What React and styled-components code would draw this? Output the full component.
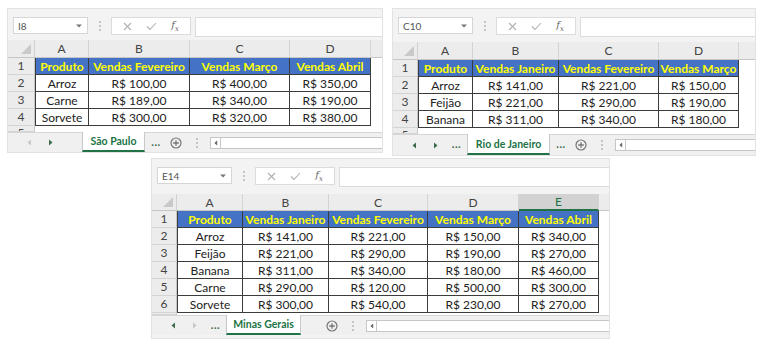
import React from "react";
import styled, { createGlobalStyle } from "styled-components";

const GREEN = "#217346";

const sheets = [
  {
    id: "sp",
    cell: "I8",
    width: 376,
    toolbar: 31,
    headerRow: 18,
    partial: 6,
    tabHeight: 20,
    tabWidth: 63,
    bottomPad: 0,
    rowHeader: 27,
    cols: [54, 101, 100, 81],
    headers: ["Produto", "Vendas Fevereiro", "Vendas Março", "Vendas Abril"],
    rows: [
      ["Arroz", "R$ 100,00", "R$ 400,00", "R$ 350,00"],
      ["Carne", "R$ 189,00", "R$ 340,00", "R$ 190,00"],
      ["Sorvete", "R$ 300,00", "R$ 320,00", "R$ 380,00"],
    ],
    tab: "São Paulo",
    prevActive: false,
    nextActive: true,
    leftDots: false,
    rightDots: true,
  },
  {
    id: "rj",
    cell: "C10",
    width: 364,
    toolbar: 33,
    headerRow: 18,
    partial: 6,
    tabHeight: 21,
    tabWidth: 83,
    bottomPad: 0,
    rowHeader: 25,
    cols: [55, 86, 100, 80],
    headers: ["Produto", "Vendas Janeiro", "Vendas Fevereiro", "Vendas Março"],
    rows: [
      ["Arroz", "R$ 141,00", "R$ 221,00", "R$ 150,00"],
      ["Feijão", "R$ 221,00", "R$ 290,00", "R$ 190,00"],
      ["Banana", "R$ 311,00", "R$ 340,00", "R$ 180,00"],
    ],
    tab: "Rio de Janeiro",
    prevActive: true,
    nextActive: true,
    leftDots: true,
    rightDots: true,
  },
  {
    id: "mg",
    cell: "E14",
    width: 459,
    toolbar: 35,
    headerRow: 17,
    partial: 2,
    tabHeight: 20,
    tabWidth: 75,
    bottomPad: 3,
    rowHeader: 25,
    cols: [66, 86, 99, 91, 80],
    selectedCol: 4,
    headers: ["Produto", "Vendas Janeiro", "Vendas Fevereiro", "Vendas Março", "Vendas Abril"],
    rows: [
      ["Arroz", "R$ 141,00", "R$ 221,00", "R$ 150,00", "R$ 340,00"],
      ["Feijão", "R$ 221,00", "R$ 290,00", "R$ 190,00", "R$ 270,00"],
      ["Banana", "R$ 311,00", "R$ 340,00", "R$ 180,00", "R$ 460,00"],
      ["Carne", "R$ 290,00", "R$ 120,00", "R$ 500,00", "R$ 300,00"],
      ["Sorvete", "R$ 300,00", "R$ 540,00", "R$ 230,00", "R$ 270,00"],
    ],
    tab: "Minas Gerais",
    prevActive: true,
    nextActive: false,
    leftDots: true,
    rightDots: false,
  },
];

const LETTERS = "ABCDEFGH";

const GlobalStyle = createGlobalStyle`
  body {
    margin: 0;
    background: #fff;
    font-family: Lato, "Liberation Sans", Arial, sans-serif;
  }
`;

const Page = styled.div`
  width: 768px;
  height: 349px;
  background: #fff;
  overflow: hidden;
`;

const TopRow = styled.div`
  display: flex;
  align-items: flex-start;
  gap: 9px;
  padding: 8px 0 0 7px;
`;

const BottomRow = styled.div`
  display: flex;
  padding-left: 151px;
  margin-top: 2px;
`;

const Panel = styled.div`
  width: ${p => p.$w}px;
  box-sizing: border-box;
  border: 1px solid #e2e2e2;
  background: #f3f3f3;
  padding-bottom: ${p => p.$pad}px;
  overflow: hidden;
`;

/* formula bar */

const Toolbar = styled.div`
  height: ${p => p.$h}px;
  box-sizing: border-box;
  display: flex;
  align-items: flex-start;
  padding: 8px 0 0 5px;
  background: #f3f3f3;
`;

const NameBox = styled.div`
  width: 75px;
  height: 17px;
  box-sizing: border-box;
  flex: none;
  display: flex;
  align-items: center;
  justify-content: space-between;
  padding: 0 5px 0 4px;
  background: #fff;
  border: 1px solid #d6d6d6;
  font-size: 10px;
  color: #555;
`;

const Grip = styled.div`
  width: 23px;
  flex: none;
  display: flex;
  justify-content: center;
  padding-top: 4px;
`;

const FxBox = styled.div`
  width: 80px;
  height: 18px;
  flex: none;
  box-sizing: border-box;
  display: flex;
  align-items: center;
  justify-content: space-around;
  padding: 0 4px;
  background: #fff;
  border: 1px solid #dcdcdc;
  margin-right: 4px;
`;

const FxLabel = styled.span`
  font-family: "DejaVu Serif", "Liberation Serif", serif;
  font-style: italic;
  font-size: 10px;
  color: #666;
  sub {
    font-size: 7px;
  }
`;

const FormulaInput = styled.div`
  flex: 1;
  height: 18px;
  background: #fff;
  border: 1px solid #dcdcdc;
  border-right: none;
`;

/* grid */

const Grid = styled.div`
  display: grid;
  grid-template-columns: ${p => p.$cols};
  grid-template-rows: ${p => p.$rows};
  background: #fff;
`;

const Corner = styled.div`
  background: #ececec;
  border-right: 1px solid #d0d0d0;
  border-bottom: 1px solid #c6c6c6;
  display: flex;
  align-items: flex-end;
  justify-content: flex-end;
  padding: 0 3px 3px 0;
`;

const ColHead = styled.div`
  background: ${p => (p.$selected ? "#d2d2d2" : "#ececec")};
  color: ${p => (p.$selected ? GREEN : "#444")};
  border-right: 1px solid #d4d4d4;
  border-bottom: ${p => (p.$selected ? `2px solid ${GREEN}` : "1px solid #c6c6c6")};
  font-size: 12px;
  display: flex;
  align-items: center;
  justify-content: center;
`;

const HeadFill = styled.div`
  background: #ececec;
  border-bottom: 1px solid #c6c6c6;
`;

const RowHead = styled.div`
  background: #ececec;
  color: #444;
  border-right: 1px solid #c6c6c6;
  border-bottom: 1px solid #d4d4d4;
  font-size: 12px;
  display: flex;
  align-items: ${p => (p.$cut ? "flex-start" : "center")};
  justify-content: center;
  overflow: hidden;
  line-height: 14px;
`;

const Cell = styled.div`
  box-sizing: border-box;
  display: flex;
  align-items: center;
  justify-content: center;
  white-space: nowrap;
  overflow: hidden;
  border-right: 1px solid #3c3c3c;
  border-bottom: 1px solid #3c3c3c;
  border-left: ${p => (p.$first ? "1px solid #3c3c3c" : "none")};
  background: ${p => (p.$head ? "#4472c4" : "#fff")};
  color: ${p => (p.$head ? "#ffff00" : "#222")};
  font-weight: ${p => (p.$head ? 700 : 400)};
  font-size: 12px;
`;

const Blank = styled.div`
  background: #fff;
`;

/* sheet tabs */

const TabBar = styled.div`
  height: ${p => p.$h}px;
  box-sizing: border-box;
  display: flex;
  align-items: stretch;
  background: #f0f0f0;
  border-top: 1px solid #d6d6d6;
`;

const Nav = styled.div`
  width: 74px;
  flex: none;
  display: flex;
  padding-left: 11px;
  box-sizing: border-box;
`;

const Slot = styled.div`
  width: ${p => p.$w}px;
  flex: none;
  display: flex;
  align-items: center;
  justify-content: center;
`;

const Dots = styled.span`
  font-size: 11px;
  font-weight: 700;
  color: #3d6b4a;
  letter-spacing: 0.5px;
  line-height: 1;
  margin-top: -3px;
`;

const Tab = styled.div`
  width: ${p => p.$w}px;
  flex: none;
  box-sizing: border-box;
  display: flex;
  align-items: center;
  justify-content: center;
  margin-top: -1px;
  background: #fff;
  border-left: 1px solid #c8c8c8;
  border-right: 1px solid #c8c8c8;
  border-bottom: 2px solid ${GREEN};
  color: ${GREEN};
  font-weight: 700;
  font-size: 10.5px;
  white-space: nowrap;
`;

const Scroll = styled.div`
  flex: 1;
  align-self: center;
  height: 12px;
  box-sizing: border-box;
  margin-left: 1px;
  background: #fff;
  border: 1px solid #c6c6c6;
  border-right: none;
  display: flex;
`;

const ScrollButton = styled.div`
  width: 9px;
  border-right: 1px solid #c6c6c6;
  display: flex;
  align-items: center;
  justify-content: center;
`;

const Arrow = ({ dir, color, size = 5 }) => (
  <svg width={size} height={size + 2} viewBox="0 0 5 7">
    {dir === "left" ? (
      <polygon points="4,0.5 4,6.5 0.5,3.5" fill={color} />
    ) : (
      <polygon points="1,0.5 1,6.5 4.5,3.5" fill={color} />
    )}
  </svg>
);

const VDots = ({ color = "#b5b5b5" }) => (
  <svg width="2" height="10" viewBox="0 0 2 10">
    <rect x="0" y="0" width="2" height="2" fill={color} />
    <rect x="0" y="4" width="2" height="2" fill={color} />
    <rect x="0" y="8" width="2" height="2" fill={color} />
  </svg>
);

const Caret = () => (
  <svg width="6" height="4" viewBox="0 0 6 4">
    <polygon points="0,0.5 6,0.5 3,3.5" fill="#777" />
  </svg>
);

const Cancel = () => (
  <svg width="9" height="9" viewBox="0 0 9 9">
    <path d="M1 1 L8 8 M8 1 L1 8" stroke="#b0b0b0" strokeWidth="1.1" fill="none" />
  </svg>
);

const Enter = () => (
  <svg width="11" height="9" viewBox="0 0 11 9">
    <path d="M1 4.5 L4 7.5 L10 1" stroke="#b0b0b0" strokeWidth="1.1" fill="none" />
  </svg>
);

const PlusCircle = () => (
  <svg width="12" height="12" viewBox="0 0 12 12">
    <circle cx="6" cy="6" r="5" stroke="#777" strokeWidth="1.2" fill="none" />
    <path d="M6 3.2 V8.8 M3.2 6 H8.8" stroke="#777" strokeWidth="1.3" />
  </svg>
);

const SelectAll = () => (
  <svg width="10" height="10" viewBox="0 0 10 10">
    <polygon points="10,0 10,10 0,10" fill="#c9c9c9" />
  </svg>
);

const FormulaBar = ({ sheet }) => (
  <Toolbar $h={sheet.toolbar}>
    <NameBox>
      <span>{sheet.cell}</span>
      <Caret />
    </NameBox>
    <Grip>
      <VDots color="#c4c4c4" />
    </Grip>
    <FxBox>
      <Cancel />
      <Enter />
      <FxLabel>
        f<sub>x</sub>
      </FxLabel>
    </FxBox>
    <FormulaInput />
  </Toolbar>
);

const Sheet = ({ sheet }) => {
  const template = `${sheet.rowHeader}px ${sheet.cols.map(c => `${c}px`).join(" ")} 1fr`;
  const rows = `${sheet.headerRow}px repeat(${sheet.rows.length + 1}, 17px) ${sheet.partial}px`;
  const body = [sheet.headers, ...sheet.rows];
  // the next row number only peeks out when there is room for it
  const nextRow = sheet.partial > 4 ? body.length + 1 : null;

  return (
    <Grid $cols={template} $rows={rows}>
      <Corner>
        <SelectAll />
      </Corner>
      {sheet.cols.map((_, i) => (
        <ColHead key={i} $selected={sheet.selectedCol === i}>
          {LETTERS[i]}
        </ColHead>
      ))}
      <HeadFill />

      {body.map((row, r) => (
        <React.Fragment key={r}>
          <RowHead>{r + 1}</RowHead>
          {row.map((value, c) => (
            <Cell key={c} $head={r === 0} $first={c === 0}>
              {value}
            </Cell>
          ))}
          <Blank />
        </React.Fragment>
      ))}

      <RowHead $cut>{nextRow}</RowHead>
      {sheet.cols.map((_, i) => (
        <Blank key={i} />
      ))}
      <Blank />
    </Grid>
  );
};

const SheetTabs = ({ sheet }) => (
  <TabBar $h={sheet.tabHeight}>
    <Nav>
      <Slot $w={21}>
        <Arrow dir="left" color={sheet.prevActive ? "#3d6b4a" : "#c8c8c8"} />
      </Slot>
      <Slot $w={21}>
        <Arrow dir="right" color={sheet.nextActive ? "#3d6b4a" : "#c8c8c8"} />
      </Slot>
      <Slot $w={21}>{sheet.leftDots && <Dots>...</Dots>}</Slot>
    </Nav>
    <Tab $w={sheet.tabWidth}>{sheet.tab}</Tab>
    <Slot $w={22}>{sheet.rightDots && <Dots>...</Dots>}</Slot>
    <Slot $w={18}>
      <PlusCircle />
    </Slot>
    <Slot $w={24}>
      <VDots color="#c4c4c4" />
    </Slot>
    <Scroll>
      <ScrollButton>
        <Arrow dir="left" color="#666" size={4} />
      </ScrollButton>
    </Scroll>
  </TabBar>
);

const Workbook = ({ sheet }) => (
  <Panel $w={sheet.width} $pad={sheet.bottomPad}>
    <FormulaBar sheet={sheet} />
    <Sheet sheet={sheet} />
    <SheetTabs sheet={sheet} />
  </Panel>
);

const App = () => (
  <Page>
    <GlobalStyle />
    <TopRow>
      <Workbook sheet={sheets[0]} />
      <Workbook sheet={sheets[1]} />
    </TopRow>
    <BottomRow>
      <Workbook sheet={sheets[2]} />
    </BottomRow>
  </Page>
);

export default App;
